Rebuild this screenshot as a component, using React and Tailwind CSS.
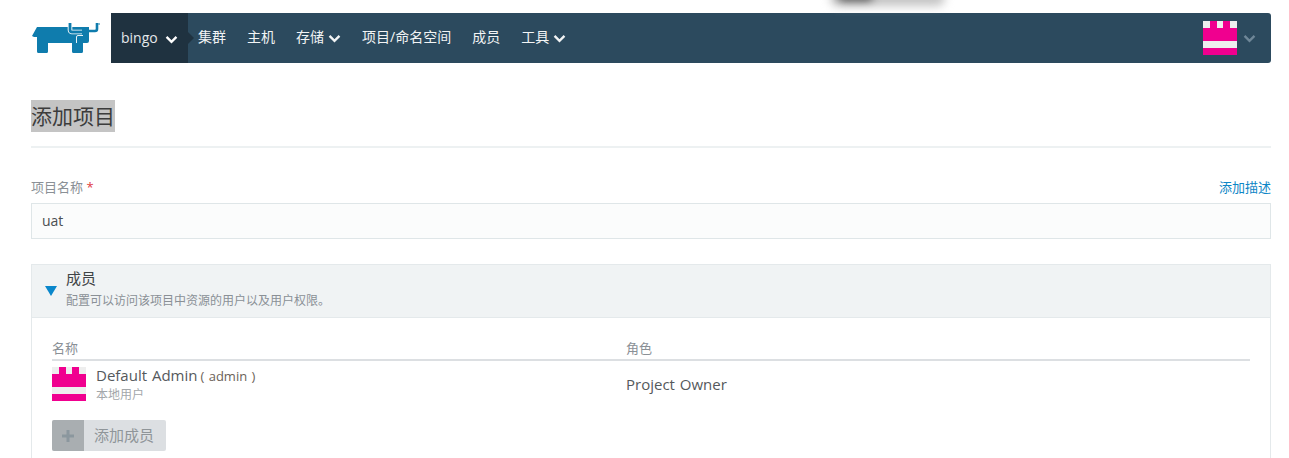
const Chevron = ({ className }) => (
  <svg viewBox="0 0 14 10" className={className} fill="none" stroke="currentColor" strokeWidth="2.6">
    <path d="M1.5 2 L7 7.5 L12.5 2" />
  </svg>
)

const Identicon = ({ className }) => (
  <svg viewBox="0 0 34 34" className={className} shapeRendering="crispEdges">
    <rect width="34" height="34" fill="#f0008f" />
    <rect x="0" y="0" width="7" height="7" fill="#eeeeee" />
    <rect x="14" y="0" width="6" height="7" fill="#eeeeee" />
    <rect x="27" y="0" width="7" height="7" fill="#eeeeee" />
    <rect x="0" y="20" width="34" height="7" fill="#eeeeee" />
  </svg>
)

const Logo = () => (
  <svg viewBox="0 0 70 32" className="w-[70px] h-[32px]">
    <path
      d="M6 5 H58 V19 a2 2 0 0 1 -2 2 H52 V29.5 a1.5 1.5 0 0 1 -1.5 1.5 H42.5 a1.5 1.5 0 0 1 -1.5 -1.5 V21 H17 V29.5 a1.5 1.5 0 0 1 -1.5 1.5 H7.5 a1.5 1.5 0 0 1 -1.5 -1.5 V15 H3 L1 14 Z"
      fill="#0f7cad"
    />
    {/* horn with its white outline, cut out of the body */}
    <path d="M39 1 V8 a2 2 0 0 0 2 2 H51" fill="none" stroke="#fff" strokeWidth="4.6" />
    <path d="M39 1 V8 a2 2 0 0 0 2 2 H51" fill="none" stroke="#0f7cad" strokeWidth="2.8" />
    <path d="M45.5 21 V15 a1.5 1.5 0 0 1 1.5 -1.5 H52" fill="none" stroke="#fff" strokeWidth="0.9" />
    <path d="M66 1 V7 a2 2 0 0 1 -2 2 H57" fill="none" stroke="#0f7cad" strokeWidth="2.6" />
    <circle cx="68" cy="2" r="1" fill="#5fa8c9" />
  </svg>
)

const NavItem = ({ label, caret }) => (
  <a className="flex items-center gap-[4px] text-[14px] leading-[20px] pb-[2px] text-[#f2f4f5] whitespace-nowrap">
    {label}
    {caret && <Chevron className="w-[13px] h-[9px] mt-[2px] text-[#f2f4f5]" />}
  </a>
)

export default function App() {
  return (
    <div
      className="relative h-[458px] overflow-hidden bg-white pl-[31px] pr-[18px] pt-[13px] text-[#4a4a4a]"
      style={{ fontFamily: '"Open Sans", "Noto Sans CJK SC", sans-serif' }}
    >
      {/* stray shadow at the top edge of the page */}
      <div className="absolute left-[830px] top-[-10px] h-[16px] w-[115px] rounded-full bg-[#c4c4c4] blur-[5px]" />
      <div className="absolute left-[838px] top-[-9px] h-[10px] w-[35px] rounded-full bg-[#555555] blur-[4px]" />

      <header className="flex items-stretch h-[50px]">
        <div className="w-[80px] flex items-center">
          <Logo />
        </div>
        <nav className="flex-1 flex items-center bg-[#2c4a5e] rounded-r-[3px] pr-[15px]">
          <div className="relative h-full w-[77px] bg-[#1f3240] flex items-center pl-[10px] gap-[7px] text-[14px] text-[#e4e8ea]">
            <span className="pb-[2px]">bingo</span>
            <Chevron className="w-[13px] h-[9px] mt-[3px] text-white" />
            <span className="absolute right-[-6px] top-[19px] border-y-[6px] border-y-transparent border-l-[6px] border-l-[#1f3240]" />
          </div>
          <div className="flex items-center gap-[21px] pl-[10px]">
            <NavItem label="集群" />
            <NavItem label="主机" />
            <NavItem label="存储" caret />
            <NavItem label="项目/命名空间" />
            <NavItem label="成员" />
            <NavItem label="工具" caret />
          </div>
          <div className="ml-auto flex items-center gap-[6px]">
            <Identicon className="w-[34px] h-[34px]" />
            <Chevron className="w-[13px] h-[9px] text-[#6f8798]" />
          </div>
        </nav>
      </header>

      <div className="mt-[37px] h-[48px] border-b-2 border-[#edf1f2]">
        <h1 className="text-[21px] leading-[32px] text-[#3c3c3c]">
          <span className="bg-[#c4c4c4] inline-block h-[32px]">添加项目</span>
        </h1>
      </div>

      <div className="mt-[32px] flex items-center justify-between h-[16px] text-[13px]">
        <label className="text-[#8a9096]">
          项目名称 <span className="text-[#e0393e]">*</span>
        </label>
        <a className="text-[#0e86c6]">添加描述</a>
      </div>

      <div className="mt-[7px] h-[36px] border border-[#dfe6e8] bg-[#fbfcfc] flex items-center px-[10px] pb-[2px] text-[14px] text-[#4b4f52]">
        uat
      </div>

      <section className="mt-[25px] border border-[#e4e9eb] h-[300px]">
        <div className="h-[53px] bg-[#f0f3f4] border-b border-[#e4e9eb] flex items-center pl-[13px]">
          <span className="border-x-[6px] border-x-transparent border-t-[10px] border-t-[#0a87cb]" />
          <div className="ml-[9px] -mt-[1px]">
            <div className="h-[20px] text-[15px] leading-[14px] text-[#3f4446]">成员</div>
            <div className="text-[12px] leading-[20px] text-[#8a9096]">配置可以访问该项目中资源的用户以及用户权限。</div>
          </div>
        </div>

        <div className="px-[20px]">
          <div className="grid grid-cols-[574px_1fr] mt-[24px] h-[19px] border-b-2 border-[#dcdfe2] text-[13px] leading-[12px] text-[#8a9096]">
            <span>名称</span>
            <span>角色</span>
          </div>
          <div className="grid grid-cols-[574px_1fr] items-center mt-[6px]">
            <div className="flex items-center gap-[10px]">
              <Identicon className="w-[34px] h-[34px]" />
              <div className="h-[34px]">
                <div className="text-[15px] leading-[16px] [word-spacing:1px] text-[#55595c]">
                  Default Admin
                  <span className="ml-[3px] text-[13px] [word-spacing:1px] text-[#6b6258]">( admin )</span>
                </div>
                <div className="text-[12px] leading-[22px] text-[#a3a7aa]">本地用户</div>
              </div>
            </div>
            <div className="pt-[1px] text-[15px] [word-spacing:1px] text-[#55595c]">Project Owner</div>
          </div>
          <button className="mt-[19px] flex items-center h-[31px] w-[114px] rounded-[2px] bg-[#dcdfe2] text-[15px] text-[#8f9599] overflow-hidden">
            <span className="w-[32px] h-full bg-[#a9aeb1] flex items-center justify-center text-[#8b979e]">
              <svg viewBox="0 0 12 12" className="w-[12px] h-[12px]" fill="currentColor">
                <path d="M4.5 0 H7.5 V4.5 H12 V7.5 H7.5 V12 H4.5 V7.5 H0 V4.5 H4.5 Z" />
              </svg>
            </span>
            <span className="pl-[10px]">添加成员</span>
          </button>
        </div>
      </section>
    </div>
  )
}
